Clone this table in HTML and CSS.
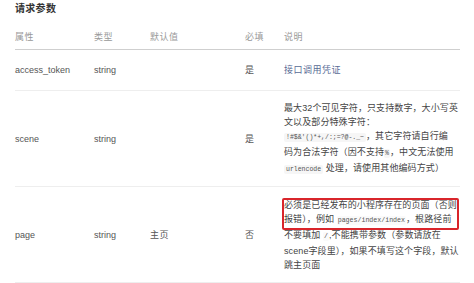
FILE: index.html
```html
<!DOCTYPE html>
<html lang="zh-CN">
<head>
<meta charset="utf-8">
<link rel="stylesheet" href="styles.css">
</head>
<body>
<div class="page">
  <h3 class="title">请求参数</h3>
  <table class="params">
    <colgroup>
      <col class="c1"><col class="c2"><col class="c3"><col class="c4"><col class="c5">
    </colgroup>
    <thead>
      <tr><th>属性</th><th>类型</th><th>默认值</th><th>必填</th><th>说明</th></tr>
    </thead>
    <tbody>
      <tr class="r1">
        <td>access_token</td><td>string</td><td></td><td class="cjk">是</td>
        <td class="cjk"><a class="link">接口调用凭证</a></td>
      </tr>
      <tr class="r2">
        <td>scene</td><td>string</td><td></td><td class="cjk">是</td>
        <td class="desc">最大32个可见字符，只支持数字，大小写英<br>文以及部分特殊字符：<br><code>!#$&amp;'()*+,/:;=?@-._~</code>，其它字符请自行编<br>码为合法字符（因不支持<code class="pc">%</code>，中文无法使用<br><code>urlencode</code> 处理，请使用其他编码方式）</td>
      </tr>
      <tr class="r3">
        <td>page</td><td>string</td><td class="cjk">主页</td><td class="cjk">否</td>
        <td class="desc mark">必须是已经发布的小程序存在的页面（否则<br>报错），例如 <code class="plain">pages/index/index</code>，根路径前<br>不要填加 <code class="plain">/</code>,不能携带参数（参数请放在<br>scene字段里），如果不填写这个字段，默认<br>跳主页面<span class="redbox"></span></td>
      </tr>
    </tbody>
  </table>
</div>
</body>
</html>
```
FILE: styles.css
```css
html, body {
  margin: 0;
  padding: 0;
  background: #fff;
}
body {
  font-family: "Liberation Sans", "Noto Sans CJK SC", sans-serif;
  font-size: 9px;
  color: #555;
}
.page {
  padding: 0 14px 0 15px;
}
.title {
  margin: 0;
  padding-top: 3px;
  height: 22px;
  font-size: 10px;
  font-weight: 600;
  color: #333;
  line-height: 12px;
  letter-spacing: 0.3px;
}
.params {
  border-collapse: collapse;
  width: 445px;
  table-layout: fixed;
}
.c1 { width: 79px; }
.c2 { width: 56px; }
.c3 { width: 95px; }
.c4 { width: 39px; }
.c5 { width: 176px; }
.params th {
  text-align: left;
  font-weight: normal;
  color: #999;
  padding: 0;
  height: 24px;
  line-height: 12px;
  vertical-align: middle;
  border-bottom: 1px solid #cfcfcf;
  letter-spacing: 0.5px;
}
.params td {
  padding: 0;
  vertical-align: middle;
  border-bottom: 1px solid #eeeeee;
  color: #555;
  line-height: 14px;
}
.params td.cjk { letter-spacing: 0.5px; }
.r1 td { height: 40px; }
.r2 td { height: 95px; }
.r3 td { height: 95px; }
.link { color: #576b95; }
.desc {
  color: #444 !important;
  white-space: nowrap;
  letter-spacing: 0.1px;
}
code {
  font-family: "Liberation Mono", "DejaVu Sans Mono", monospace;
  font-size: 6.5px;
  background: #f6f6f6;
  color: #555;
  padding: 1px 2px;
  border-radius: 2px;
  letter-spacing: 0;
}
code.plain {
  background: #fafafa;
  font-size: 6.6px;
  padding: 1px 1px;
}
code.pc { padding: 1px 1px; }
.mark {
  position: relative;
}
.redbox {
  position: absolute;
  left: -2px;
  top: 11px;
  width: 173px;
  height: 28px;
  border: 2px solid #d9252b;
  border-radius: 2px;
}
```
